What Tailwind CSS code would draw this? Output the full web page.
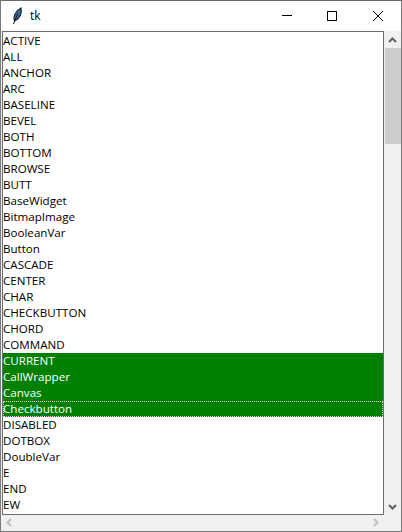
<!DOCTYPE html>
<html>
<head>
  <title>tk</title>
  <script src="https://cdn.jsdelivr.net/npm/@tailwindcss/browser@4"></script>
</head>
<body class="bg-white overflow-hidden">
  <div class="w-[402px] h-[532px] flex flex-col border border-t-[#6b6b6b] border-x-[#7a7a7a] border-b-[#7a7a7a] bg-[#f0f0f0] font-['Open_Sans','Noto_Sans',sans-serif] text-[11.6px] text-black overflow-hidden">
    <!-- Title bar -->
    <div class="h-[30px] shrink-0 bg-white flex items-center">
      <svg class="ml-[11px] w-[11px] h-[18px]" viewBox="0 0 11 18">
        <path d="M2.5 14 C1 10 3 4 9 1 C10 6 8 11.5 3.5 13.5 Z" fill="#3f6f9f" stroke="#14222e" stroke-width="1.2"/>
        <path d="M1.5 17 L3 13 L6 6.5" fill="none" stroke="#0b1218" stroke-width="1"/>
      </svg>
      <span class="ml-[7px] text-[12px] text-black">tk</span>
      <div class="ml-auto flex h-full">
        <div class="w-[46px] flex items-center justify-center">
          <div class="w-[10px] h-px bg-black ml-[2px] mb-px"></div>
        </div>
        <div class="w-[46px] flex items-center justify-center">
          <div class="w-[10px] h-[10px] border border-black"></div>
        </div>
        <div class="w-[46px] flex items-center justify-center">
          <svg class="w-[12px] h-[12px]" viewBox="0 0 12 12"><path d="M1 1 L11 11 M11 1 L1 11" stroke="#000" stroke-width="1" fill="none"/></svg>
        </div>
      </div>
    </div>

    <!-- Listbox and vertical scrollbar -->
    <div class="flex-1 min-h-0 flex">
      <div class="w-[382px] ml-px h-full bg-white border border-[#6e6e6e] pt-px overflow-hidden leading-[16px]">
        <div class="h-4">ACTIVE</div>
        <div class="h-4">ALL</div>
        <div class="h-4">ANCHOR</div>
        <div class="h-4">ARC</div>
        <div class="h-4">BASELINE</div>
        <div class="h-4">BEVEL</div>
        <div class="h-4">BOTH</div>
        <div class="h-4">BOTTOM</div>
        <div class="h-4">BROWSE</div>
        <div class="h-4">BUTT</div>
        <div class="h-4">BaseWidget</div>
        <div class="h-4">BitmapImage</div>
        <div class="h-4">BooleanVar</div>
        <div class="h-4">Button</div>
        <div class="h-4">CASCADE</div>
        <div class="h-4">CENTER</div>
        <div class="h-4">CHAR</div>
        <div class="h-4">CHECKBUTTON</div>
        <div class="h-4">CHORD</div>
        <div class="h-4">COMMAND</div>
        <div class="h-4 bg-[#008000] text-white">CURRENT</div>
        <div class="h-4 bg-[#008000] text-white">CallWrapper</div>
        <div class="h-4 bg-[#008000] text-white">Canvas</div>
        <div class="h-4 bg-[#008000] text-white border border-dotted border-[#f4c6f0] leading-[14px] -indent-px">Checkbutton</div>
        <div class="h-4">DISABLED</div>
        <div class="h-4">DOTBOX</div>
        <div class="h-4">DoubleVar</div>
        <div class="h-4">E</div>
        <div class="h-4">END</div>
        <div class="h-4">EW</div>
      </div>
      <div class="w-[17px] h-full flex flex-col bg-[#f0f0f0]">
        <div class="h-[17px] flex items-center justify-center">
          <svg class="w-[9px] h-[6px]" viewBox="0 0 9 6"><path d="M1 5 L4.5 1.5 L8 5" fill="none" stroke="#606060" stroke-width="2"/></svg>
        </div>
        <div class="h-[96px] ml-px bg-[#cdcdcd]"></div>
        <div class="flex-1"></div>
        <div class="h-[17px] flex items-center justify-center">
          <svg class="w-[9px] h-[6px]" viewBox="0 0 9 6"><path d="M1 1 L4.5 4.5 L8 1" fill="none" stroke="#606060" stroke-width="2"/></svg>
        </div>
      </div>
    </div>

    <!-- Horizontal scrollbar -->
    <div class="h-[16px] shrink-0 flex items-center justify-between pl-[5px] pr-[22px] pb-px bg-[#f0f0f0]">
      <svg class="w-[6px] h-[9px]" viewBox="0 0 6 9"><path d="M5 1 L1.5 4.5 L5 8" fill="none" stroke="#c0c0c0" stroke-width="2"/></svg>
      <svg class="w-[6px] h-[9px]" viewBox="0 0 6 9"><path d="M1 1 L4.5 4.5 L1 8" fill="none" stroke="#c0c0c0" stroke-width="2"/></svg>
    </div>
  </div>
</body>
</html>
